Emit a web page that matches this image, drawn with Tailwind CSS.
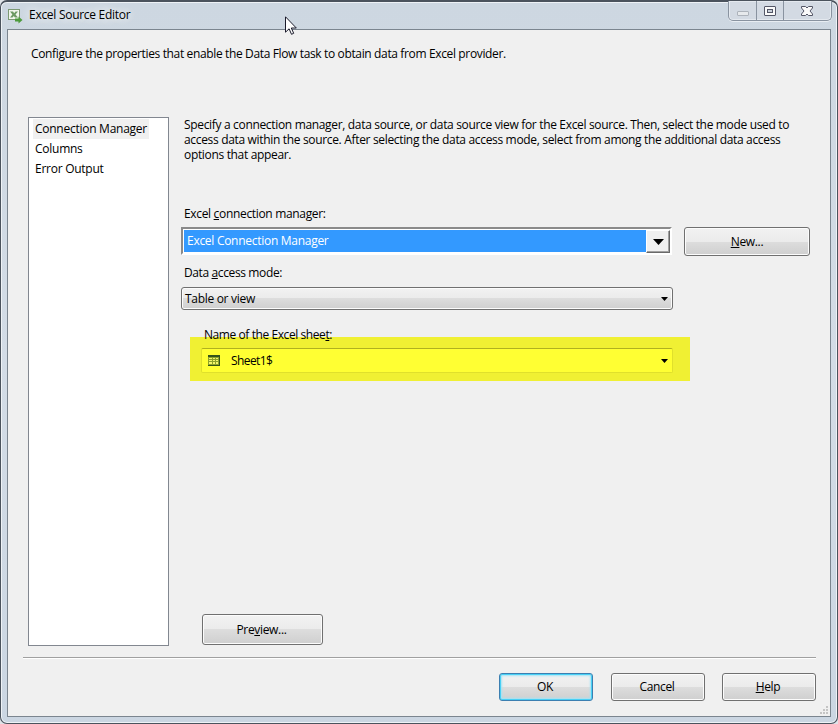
<!DOCTYPE html>
<html lang="en">
<head>
    <meta charset="UTF-8">
    <meta name="viewport" content="width=device-width, initial-scale=1.0">
    <title>Excel Source Editor</title>
    <script src="https://cdn.jsdelivr.net/npm/@tailwindcss/browser@4"></script>
</head>
<body class="w-[838px] h-[724px] overflow-hidden bg-[#dfe3e8] font-['Open_Sans',sans-serif] text-[12px] leading-[15px] tracking-[-0.33px] text-black">
    <div class="relative w-[838px] h-[724px] rounded-[7px] border border-[#4b535d] border-t-2 bg-linear-to-b from-[#cdd7e1] via-[#d3dce6] to-[#cbd6e2] shadow-[inset_0_0_0_1px_#eef2f6] pl-[6px]">

        <!-- Title bar -->
        <header class="h-[27px] flex items-center">
            <svg class="w-4 h-4 mt-px" viewBox="0 0 16 16">
                <rect x="1.500" y="1.500" width="11" height="10" fill="#f1f6ec" stroke="#7d9a74"/>
                <path d="M3 3.500h3l1.200 1.800L8.500 3.500H11L8.500 6.500 11 9.500H8L6.800 8 5.500 9.500H3l2.400-3z" fill="#6c9a62"/>
                <path d="M8 10.500h3.500V8.500L15.500 12l-4 3.500v-2H8z" fill="#4c9a3c"/>
            </svg>
            <h1 class="ml-[6px] -mt-[2px] tracking-[-0.28px] [text-shadow:0_0_8px_white,0_0_12px_white]">Excel Source Editor</h1>
        </header>

        <!-- Window controls -->
        <div class="absolute top-[-1px] right-[5px] w-[104px] h-[20px] flex rounded-b-[5px] border border-t-0 border-[#8993a0] bg-[#d3dae3] shadow-[inset_0_0_0_1px_#e4e9ef,0_1px_0_#e8edf2]">
            <div class="w-[28px] border-r border-[#8993a0] flex items-center justify-center">
                <svg class="w-3 h-[5px] mt-[5px]" viewBox="0 0 12 5"><rect x=".5" y=".5" width="11" height="4" rx=".5" fill="#e6e9ec" stroke="#adb3bb"/></svg>
            </div>
            <div class="w-[27px] border-r border-[#8993a0] flex items-center justify-center">
                <svg class="w-3 h-[10px]" viewBox="0 0 12 10">
                    <rect x=".5" y=".5" width="11" height="9" rx=".5" fill="#fafafa" stroke="#535666"/>
                    <rect x="3.500" y="3.500" width="5" height="3" fill="#c9d0da" stroke="#535666"/>
                </svg>
            </div>
            <div class="flex-1 flex items-center justify-center">
                <svg class="w-3 h-[10px] mr-[2px]" viewBox="0 0 12 10"><path d="M.5.500h4L6 2 7.500.500h4v1.500L9 5l2.500 3v1.500h-4L6 8 4.500 9.500h-4V8L3 5 .5 2z" fill="#fafafa" stroke="#535666"/></svg>
            </div>
        </div>

        <!-- Dialog body -->
        <main class="relative w-[824px] h-[688px] border border-[#7b858f] bg-[#f0f0f0]">
            <p class="h-[87px] pl-[23px] pt-[16px] tracking-[-0.36px]">Configure the properties that enable the Data Flow task to obtain data from Excel provider.</p>

            <div class="flex h-[529px] pl-[20px]">
                <nav class="w-[141px] border border-[#828790] bg-white px-1 py-px tracking-[-0.26px]">
                    <div class="w-[116px] h-5 bg-[#f0f0f0] pl-[2px] leading-[20px]">Connection Manager</div>
                    <div class="h-5 pl-[2px] leading-[20px]">Columns</div>
                    <div class="h-5 pl-[2px] leading-[20px]">Error Output</div>
                </nav>

                <section class="ml-3 w-[640px]">
                    <p class="h-[89px] pl-[3px] whitespace-nowrap">Specify a connection manager, data source, or data source view for the Excel source. Then, select the mode used to<br>access data within the source. After selecting the data access mode, select from among the additional data access<br>options that appear.</p>
                    <div class="h-[21px] pl-[3px]">Excel <u>c</u>onnection manager:</div>
                    <div class="flex h-[38px] items-start">
                        <div class="w-[491px] h-[28px] flex border-2 border-t-[#8a8a8a] border-l-[#8a8a8a] border-r-white border-b-white bg-white pt-px pl-px">
                            <div class="flex-1 h-[22px] bg-[#3399ff] text-white pl-[3px] leading-[22px] tracking-[-0.28px]">Excel Connection Manager</div>
                            <div class="w-6 h-[23px] border border-t-white border-l-white border-r-[#696969] border-b-[#696969] bg-[#f0f0f0] flex items-center justify-center shadow-[inset_-1px_-1px_0_#a0a0a0]">
                                <svg class="w-[11px] h-[6px]" viewBox="0 0 11 6"><path d="M0 0h11L5.500 6z"/></svg>
                            </div>
                        </div>
                        <button class="ml-3 w-[126px] h-[29px] rounded-[3px] border border-[#707070] bg-[linear-gradient(#f2f2f2,#ebebeb_50%,#dddddd_50%,#cfcfcf)] shadow-[inset_0_0_0_1px_#fcfcfc]"><u>N</u>ew...</button>
                    </div>
                    <div class="h-[22px] pl-[3px] tracking-[-0.38px]">Data <u>a</u>ccess mode:</div>
                    <div class="w-[492px] h-[23px] rounded-[3px] border border-[#707070] bg-[linear-gradient(#f2f2f2,#ebebeb_50%,#dddddd_50%,#cfcfcf)] shadow-[inset_0_0_0_1px_#fcfcfc] flex items-center justify-between pl-[3px] pr-1">
                        <span class="tracking-[-0.3px]">Table or view</span>
                        <svg class="w-[7px] h-1" viewBox="0 0 7 4"><path d="M0 0h7L3.500 4z"/></svg>
                    </div>
                    <div class="mt-[27px] ml-[9px] w-[500px] h-[44px] bg-[#f0f033] pl-[11px]">
                        <div class="h-[11px] pl-[3px]"><div class="-translate-y-[10px] tracking-[-0.42px]">Name of the Excel shee<u>t</u>:</div></div>
                        <div class="w-[472px] h-[25px] rounded-[2px] border border-[#e0e02c] border-t-[#b0b020] bg-[#ffff33] flex items-center pl-[6px] pr-1">
                            <svg class="w-3 h-[11px]" viewBox="0 0 12 11">
                                <path fill="#8ea32a" d="M0 0h12v11H0z"/>
                                <path fill="#35551a" d="M0 0h12v2H0zM11 2h1v9h-1zM0 10h12v1H0z"/>
                                <path fill="#f3f56a" d="M1 3h3v1H1zM5 3h2v1H5zM8 3h2v1H8zM1 5h3v1H1zM5 5h2v1H5zM8 5h2v1H8zM1 7h3v2H1zM5 7h2v2H5zM8 7h2v2H8z"/>
                            </svg>
                            <span class="ml-[11px] flex-1 tracking-[-0.6px]">Sheet1$</span>
                            <svg class="w-[7px] h-1" viewBox="0 0 7 4"><path d="M0 0h7L3.500 4z"/></svg>
                        </div>
                    </div>
                    <button class="mt-[233px] ml-[21px] w-[121px] h-[31px] pr-[2px] rounded-[3px] border border-[#707070] bg-[linear-gradient(#f2f2f2,#ebebeb_50%,#dddddd_50%,#cfcfcf)] shadow-[inset_0_0_0_1px_#fcfcfc]">Pre<u>v</u>iew...</button>
                </section>
            </div>

            <div class="mt-[11px] ml-[15px] w-[793px] h-[2px] bg-white border-t border-[#a0a0a0]"></div>
            <footer class="mt-[14px] mr-[14px] flex justify-end">
                <button class="w-[94px] h-[28px] pb-[2px] pr-[2px] rounded-[3px] border border-[#3c7fb1] bg-[linear-gradient(#f2f2f2,#ebebeb_50%,#dddddd_50%,#cfcfcf)] shadow-[inset_0_0_0_1px_#48d0f5,inset_0_0_2px_2px_#a5e3f5]">OK</button>
                <button class="ml-[18px] w-[94px] h-[28px] pb-[2px] pr-[2px] rounded-[3px] border border-[#707070] bg-[linear-gradient(#f2f2f2,#ebebeb_50%,#dddddd_50%,#cfcfcf)] shadow-[inset_0_0_0_1px_#fcfcfc]">Cancel</button>
                <button class="ml-[17px] w-[94px] h-[28px] pb-[2px] pr-[2px] rounded-[3px] border border-[#707070] bg-[linear-gradient(#f2f2f2,#ebebeb_50%,#dddddd_50%,#cfcfcf)] shadow-[inset_0_0_0_1px_#fcfcfc]"><u>H</u>elp</button>
            </footer>

            <!-- Resize grip -->
            <svg class="absolute right-[2px] bottom-[2px] w-2 h-2" viewBox="0 0 8 8">
                <path fill="#c4c4c4" d="M6 0h2v2H6zM3 3h2v2H3zM6 3h2v2H6zM0 6h2v2H0zM3 6h2v2H3zM6 6h2v2H6z"/>
            </svg>
        </main>

        <!-- Mouse pointer -->
        <svg class="absolute left-[284px] top-[14px] w-3 h-[19px]" viewBox="0 0 12 19">
            <path d="M.5.800v15.400l3.600-3.400 2.400 5.500 2.200-1-2.400-5.300h5z" fill="#fff" stroke="#1b1b2b"/>
        </svg>
    </div>
</body>
</html>
